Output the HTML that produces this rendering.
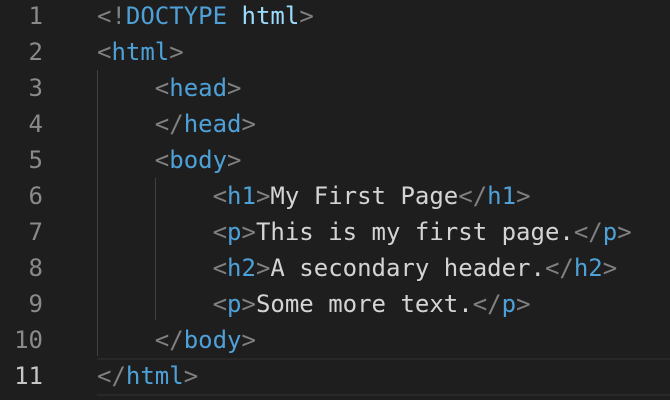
<!DOCTYPE html>
<html><head><style>
body{margin:0;width:670px;height:400px;background:#1e1e1e;overflow:hidden;position:relative;font-family:"DejaVu Sans Mono","Liberation Mono",monospace;font-size:24px}
.l{position:absolute;left:0;height:36px;line-height:36px;white-space:pre;width:670px}
.n{position:absolute;right:627px;color:#8a8a8a}
.c{position:absolute;left:97px;color:#d4d4d4}
.b{color:#808080}.t{color:#4ea1d8}.a{color:#9cdcfe}
.g{position:absolute;width:1px;background:#404040}
.cur{position:absolute;left:97px;top:358px;width:573px;height:34px;border-top:2px solid #282828;border-bottom:2px solid #282828}
</style></head><body>
<div class="cur"></div>
<div class="g" style="left:97px;top:70px;height:286px"></div>
<div class="g" style="left:155px;top:178px;height:142px"></div>
<div class="l" style="top:-2px"><span class="n">1</span><span class="c"><span class="b">&lt;!</span><span class="t">DOCTYPE</span> <span class="a">html</span><span class="b">&gt;</span></span></div>
<div class="l" style="top:34px"><span class="n">2</span><span class="c"><span class="b">&lt;</span><span class="t">html</span><span class="b">&gt;</span></span></div>
<div class="l" style="top:70px"><span class="n">3</span><span class="c">    <span class="b">&lt;</span><span class="t">head</span><span class="b">&gt;</span></span></div>
<div class="l" style="top:106px"><span class="n">4</span><span class="c">    <span class="b">&lt;/</span><span class="t">head</span><span class="b">&gt;</span></span></div>
<div class="l" style="top:142px"><span class="n">5</span><span class="c">    <span class="b">&lt;</span><span class="t">body</span><span class="b">&gt;</span></span></div>
<div class="l" style="top:178px"><span class="n">6</span><span class="c">        <span class="b">&lt;</span><span class="t">h1</span><span class="b">&gt;</span>My First Page<span class="b">&lt;/</span><span class="t">h1</span><span class="b">&gt;</span></span></div>
<div class="l" style="top:214px"><span class="n">7</span><span class="c">        <span class="b">&lt;</span><span class="t">p</span><span class="b">&gt;</span>This is my first page.<span class="b">&lt;/</span><span class="t">p</span><span class="b">&gt;</span></span></div>
<div class="l" style="top:250px"><span class="n">8</span><span class="c">        <span class="b">&lt;</span><span class="t">h2</span><span class="b">&gt;</span>A secondary header.<span class="b">&lt;/</span><span class="t">h2</span><span class="b">&gt;</span></span></div>
<div class="l" style="top:286px"><span class="n">9</span><span class="c">        <span class="b">&lt;</span><span class="t">p</span><span class="b">&gt;</span>Some more text.<span class="b">&lt;/</span><span class="t">p</span><span class="b">&gt;</span></span></div>
<div class="l" style="top:322px"><span class="n">10</span><span class="c">    <span class="b">&lt;/</span><span class="t">body</span><span class="b">&gt;</span></span></div>
<div class="l" style="top:358px"><span class="n" style="color:#c6c6c6">11</span><span class="c"><span class="b">&lt;/</span><span class="t">html</span><span class="b">&gt;</span></span></div>
</body></html>
